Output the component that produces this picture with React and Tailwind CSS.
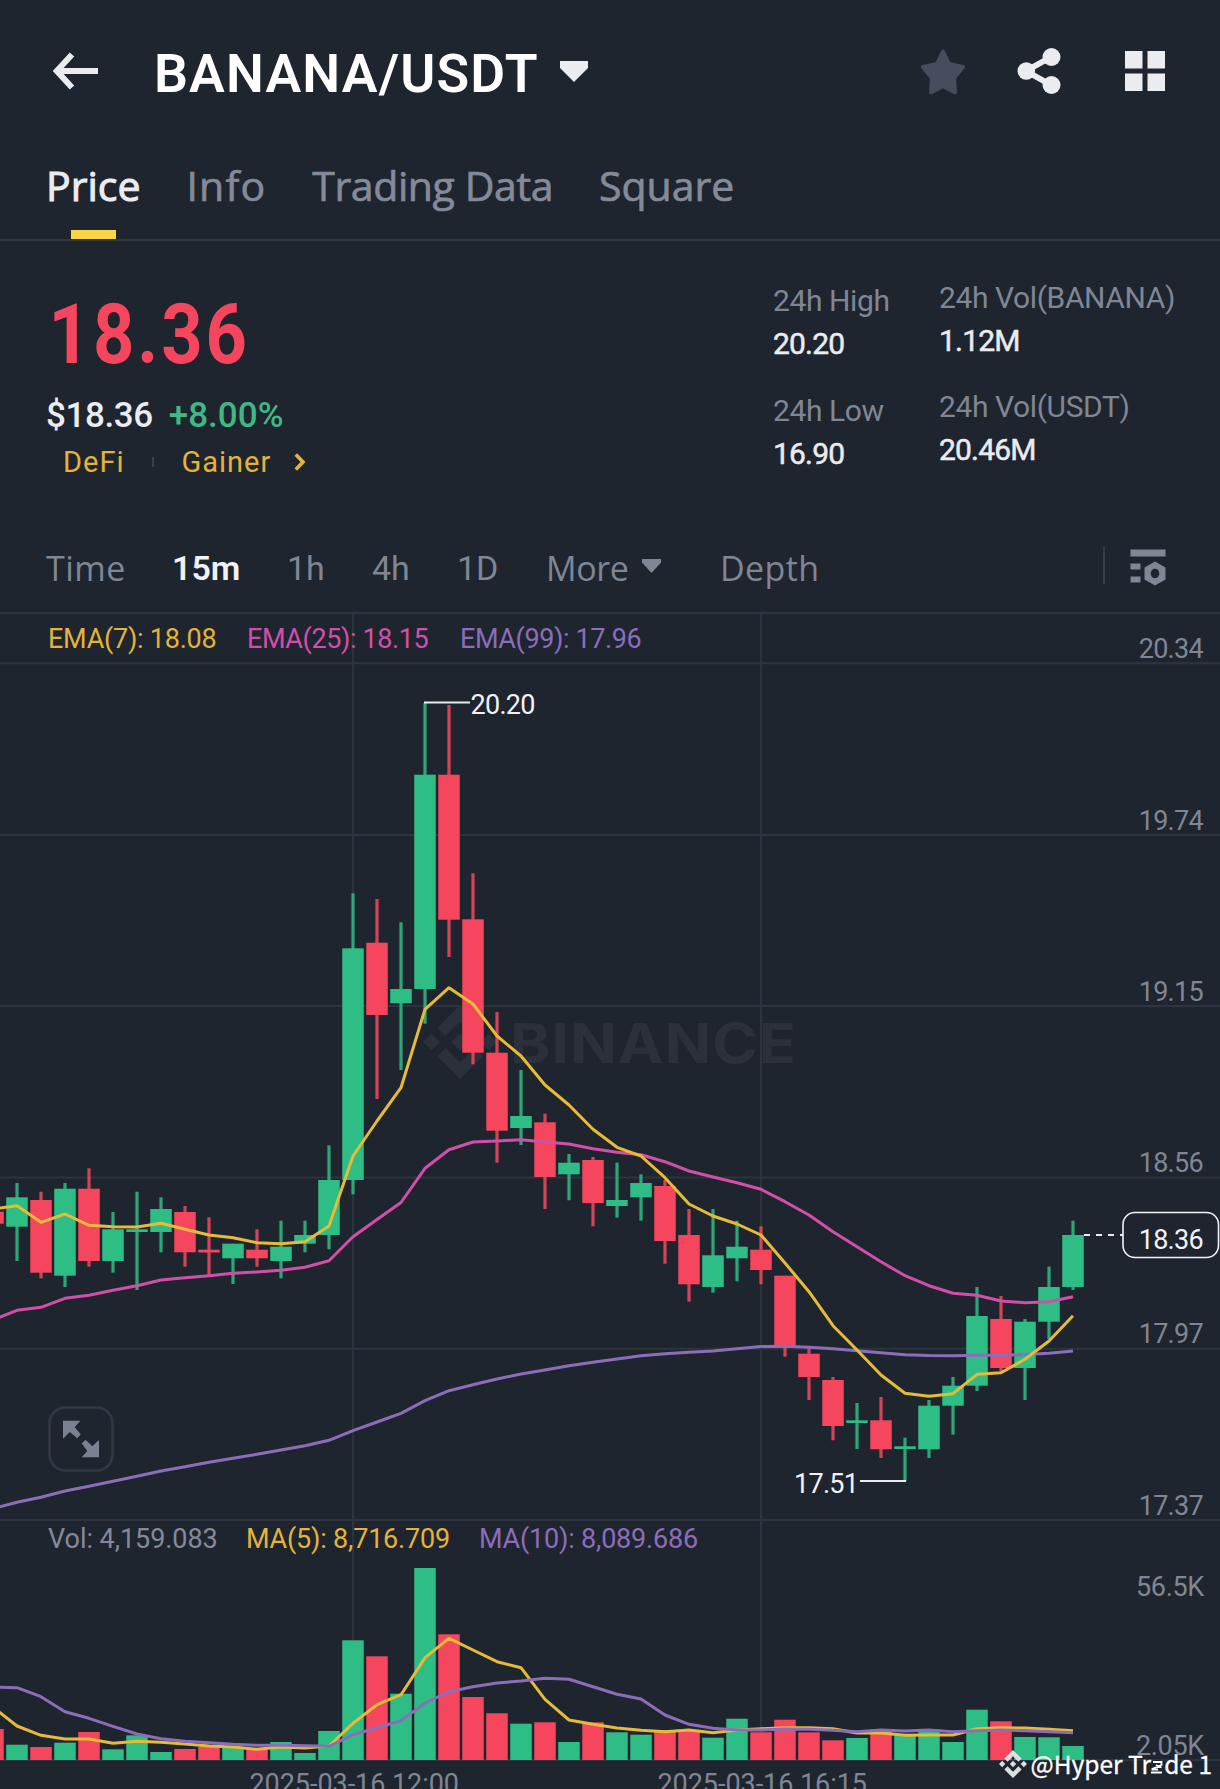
const UP = "#2ebd85";
const DOWN = "#f6465d";
const STEP = 24;
const FIRST_X = -7;
const BODY = 21.5;

// [direction, body top, body bottom, wick top, wick bottom, volume top]
const candles = [
  [DOWN, 1211.7, 1223.7, 1211.7, 1223.7, 1729],
  [UP, 1197.3, 1226.7, 1183, 1261, 1744.7],
  [DOWN, 1200, 1272.7, 1191.7, 1278.3, 1747],
  [UP, 1188.7, 1275.7, 1183, 1287, 1742.7],
  [DOWN, 1188.7, 1261, 1168.3, 1266.7, 1732],
  [UP, 1229.3, 1261, 1212, 1272.7, 1749.3],
  [UP, 1229.3, 1232, 1191.7, 1290, 1735.3],
  [UP, 1209, 1232, 1197.3, 1252.3, 1752],
  [DOWN, 1212, 1252.3, 1206, 1266.7, 1749],
  [DOWN, 1249.7, 1252.5, 1217.3, 1274.7, 1746.7],
  [UP, 1243.7, 1258.3, 1243.7, 1284, 1746.7],
  [DOWN, 1249.7, 1258.3, 1229.3, 1266.7, 1749.7],
  [UP, 1246.7, 1261, 1220.7, 1278.3, 1742],
  [UP, 1235, 1243.7, 1220.7, 1252.3, 1753],
  [UP, 1180, 1235, 1145.3, 1249.3, 1731],
  [UP, 948.3, 1180, 893.3, 1194.3, 1640.3],
  [DOWN, 942.7, 1015, 899, 1099, 1656.3],
  [UP, 989, 1003.3, 922.3, 1070, 1693.7],
  [UP, 774.7, 989, 702.7, 1023.7, 1568],
  [DOWN, 774.7, 919.7, 705, 957, 1634.3],
  [DOWN, 919.3, 1052.7, 873.3, 1064.3, 1697],
  [DOWN, 1052.7, 1130.7, 1012, 1162.7, 1713.3],
  [UP, 1116, 1128, 1070, 1145, 1723.7],
  [DOWN, 1122.3, 1177, 1113.7, 1209, 1722.3],
  [UP, 1162.7, 1174.3, 1154, 1200.3, 1742],
  [DOWN, 1160, 1203, 1157, 1226.3, 1722.3],
  [UP, 1200, 1206, 1162.7, 1217.7, 1732.3],
  [UP, 1183, 1197.3, 1174.3, 1220.7, 1734.7],
  [DOWN, 1186, 1241, 1180, 1263.7, 1730],
  [DOWN, 1235, 1284.3, 1209, 1301.7, 1731],
  [UP, 1255.3, 1287, 1209, 1292.7, 1737.7],
  [UP, 1246.7, 1258.3, 1220.7, 1281.3, 1718.7],
  [DOWN, 1249.7, 1270, 1226.3, 1284.3, 1732.3],
  [DOWN, 1275.7, 1345.7, 1275.7, 1356.7, 1719.7],
  [DOWN, 1353.7, 1377, 1348.3, 1400, 1732.3],
  [DOWN, 1380, 1426, 1377, 1440.3, 1740.3],
  [UP, 1420.3, 1423, 1403, 1449, 1738],
  [DOWN, 1420.3, 1449.3, 1397, 1458, 1729],
  [UP, 1446.3, 1449, 1437.7, 1481.3, 1734.7],
  [UP, 1405.7, 1449.3, 1400, 1458, 1729.3],
  [UP, 1385.7, 1405.7, 1377, 1434.7, 1742],
  [UP, 1316, 1385.7, 1287, 1391, 1709.7],
  [DOWN, 1319, 1368, 1296, 1371.7, 1721.3],
  [UP, 1321.7, 1368, 1319, 1400, 1737],
  [UP, 1287, 1321.7, 1266.7, 1339.3, 1737.3],
  [UP, 1235, 1287, 1220.7, 1290, 1746],
];

const ema7 = [
  1209, 1205.7, 1222.3, 1214, 1225.3, 1226.7, 1227, 1223.3, 1229.3, 1235, 1237.7, 1242.7, 1243.7, 1241.7, 1226,
  1156, 1121, 1087.7, 1009.3, 987.7, 1004, 1036, 1056, 1085, 1105, 1129.3, 1147.3, 1156, 1177.7, 1204, 1216, 1224,
  1235, 1263, 1291.7, 1325.7, 1350, 1375, 1393.3, 1396.3, 1393.7, 1374.3, 1372.7, 1359.3, 1341, 1315.7,
];
const ema25 = [
  1320, 1310.3, 1307.3, 1298.3, 1295.3, 1290.3, 1285.7, 1280, 1277.7, 1275.7, 1273.3, 1272, 1270.3, 1267.3, 1260.7,
  1236.7, 1219.5, 1202.5, 1168.3, 1149.7, 1142, 1141, 1139.7, 1142, 1144, 1148.7, 1152.3, 1154.7, 1161.7, 1171, 1177,
  1182.7, 1189.3, 1201.7, 1215, 1231.7, 1246.7, 1261.7, 1275.7, 1285.7, 1293.3, 1295.3, 1301, 1302.7, 1301.7, 1296.7,
];
const ema99 = [
  1508.5, 1502.3, 1497.3, 1491, 1486.3, 1481.3, 1476.3, 1471, 1466.7, 1462.3, 1458.3, 1454.3, 1450, 1445.7, 1440.3,
  1430.7, 1422, 1413.3, 1400.7, 1390.7, 1384.7, 1379, 1374, 1370, 1365.7, 1362.3, 1359, 1355.7, 1353.7, 1352.3, 1351,
  1348.7, 1346.5, 1346.3, 1347.3, 1348.7, 1350.7, 1352.7, 1354.7, 1355.5, 1355.7, 1355.3, 1355.3, 1354.5, 1353.3, 1351,
];
const volMa5 = [
  1707, 1726, 1735.3, 1739, 1739, 1743.3, 1741.3, 1742.3, 1744, 1746, 1747, 1749.3, 1747, 1748, 1746, 1723.3, 1704.7,
  1694.7, 1657.7, 1638.3, 1650, 1661.7, 1667.7, 1699.3, 1720, 1724.3, 1728, 1730.3, 1731.7, 1730, 1732.7, 1730,
  1728.7, 1727.7, 1727.7, 1728.7, 1733, 1733, 1735.3, 1735, 1735, 1728.7, 1727.7, 1728, 1729.3, 1730.7,
];
const volMa10 = [
  1687, 1687.7, 1696.7, 1711.7, 1718.3, 1726.3, 1734, 1738.7, 1741.3, 1742.7, 1744.3, 1745.3, 1745.3, 1745.7, 1746.3,
  1734.7, 1727.7, 1720.7, 1703, 1691.7, 1686.7, 1683, 1681, 1678.3, 1679.3, 1686.7, 1694.3, 1699, 1715, 1724.3, 1728.3,
  1730, 1730, 1729, 1729.3, 1730.3, 1731.7, 1730, 1731, 1730, 1731.7, 1730.7, 1730, 1730.7, 1731.7, 1732.7,
];

const priceAxis = [
  ["20.34", 663.3],
  ["19.74", 835],
  ["19.15", 1006],
  ["18.56", 1177.5],
  ["17.97", 1348.7],
  ["17.37", 1520],
];

const tabs = [
  { label: "Price", className: "text-[#eaecef] [-webkit-text-stroke:1px_#eaecef]", active: true },
  { label: "Info", className: "text-[#848a98] tracking-[1.2px] [-webkit-text-stroke:0.7px_#848a98]" },
  { label: "Trading Data", className: "text-[#848a98] tracking-[-0.4px] [-webkit-text-stroke:0.7px_#848a98]" },
  { label: "Square", className: "text-[#848a98] [-webkit-text-stroke:0.7px_#848a98]" },
];

const intervals = [
  { label: "Time", className: "w-[126px] font-['Open_Sans',sans-serif] tracking-[0.5px]" },
  { label: "15m", className: "w-[115px] font-semibold text-[#f1f2f5]" },
  { label: "1h", className: "w-[85px]" },
  { label: "4h", className: "w-[85px]" },
  { label: "1D", className: "w-[89px]" },
  { label: "More", className: "w-[96px] font-['Open_Sans',sans-serif] tracking-[-0.4px]" },
];

const centerX = (i) => FIRST_X + i * STEP;
const toPoints = (values) => values.map((y, i) => `${centerX(i)},${y}`).join(" ");

function BinanceMark(props) {
  return (
    <svg viewBox="0 0 126.61 126.61" {...props}>
      <path d="M38.73 53.2l24.59-24.58 24.6 24.6 14.3-14.31L63.32 0 24.42 38.9zM0 63.31l14.3-14.31 14.31 14.31-14.31 14.3zM38.73 73.41l24.59 24.59 24.6-24.6 14.31 14.29-38.9 38.91-38.91-38.88zM98 63.31l14.3-14.31 14.31 14.3-14.31 14.32zM77.83 63.3L63.32 48.78 48.81 63.28l14.51 14.5z" />
    </svg>
  );
}

function Header() {
  return (
    <header className="flex h-[142px] items-center pl-[52px] pr-[55px]">
      <svg className="h-[38px] w-[46px]" viewBox="0 0 46 38" fill="none" stroke="#eaecef" strokeWidth="6">
        <path d="M20 2.5L4.8 19L20 35.5M4 19H46" />
      </svg>
      <h1 className="ml-[56px] w-[406px] pt-[5px] text-[53.5px] leading-none font-semibold tracking-[1.15px] whitespace-nowrap text-white">
        BANANA/USDT
      </h1>
      <svg className="h-[21px] w-[28px]" viewBox="0 0 28 21" fill="#eaecef">
        <path d="M0 0H28V7L14 21L0 7Z" />
      </svg>
      <div className="ml-auto flex items-center">
        <svg className="mt-[2px] mr-[51px] h-[46px] w-[46px]" viewBox="0 0 46 46" fill="#474d5c" stroke="#474d5c" strokeWidth="4" strokeLinejoin="round">
          <path d="M23 2.5L29 15L43 18L34 29L35 43.5L23 37L11 43.5L12 29L3 18L17 15Z" />
        </svg>
        <svg className="mr-[64px] h-[46px] w-[44px]" viewBox="0 0 44 46" fill="#eaecef" stroke="#eaecef">
          <path d="M34 9L9 23L34 37" fill="none" strokeWidth="6" />
          <circle cx="9.3" cy="23" r="8.8" stroke="none" />
          <circle cx="34.5" cy="9" r="9" stroke="none" />
          <circle cx="34.5" cy="37" r="9" stroke="none" />
        </svg>
        <svg className="h-[40px] w-[40px]" viewBox="0 0 40 40" fill="#eaecef">
          <path d="M0 0H17.5V17.5H0ZM22.5 0H40V17.5H22.5ZM0 22.5H17.5V40H0ZM22.5 22.5H40V40H22.5Z" />
        </svg>
      </div>
    </header>
  );
}

function Tabs() {
  return (
    <nav className="flex h-[99px] gap-[46px] border-b-2 border-[#2f3641] pl-[46px] font-['Open_Sans',sans-serif] text-[41px] font-medium">
      {tabs.map((tab) => (
        <div key={tab.label} className="relative h-[97px]">
          <span className={`block leading-[86px] whitespace-nowrap ${tab.className}`}>{tab.label}</span>
          {tab.active && <span className="absolute bottom-0 left-[25px] h-[9px] w-[45px] bg-[#fad541]" />}
        </div>
      ))}
    </nav>
  );
}

function Stat({ label, value }) {
  return (
    <div className="text-[30px] leading-[43px] whitespace-nowrap">
      <div className="tracking-[-0.4px] text-[#7f8694]">{label}</div>
      <div className="tracking-[-0.8px] text-[#eaecef] [-webkit-text-stroke:0.5px_#eaecef]">{value}</div>
    </div>
  );
}

function Summary() {
  return (
    <section className="flex h-[282px]">
      <div className="w-[773px] pt-[54px] pl-[46px]">
        <div className="w-fit origin-left scale-x-[0.86] pl-[3px] text-[84px] leading-[80px] font-bold tracking-[3.4px] text-[#f6465d]">
          18.36
        </div>
        <div className="mt-[21px] flex gap-[16px] text-[35px] leading-[40px] font-medium">
          <span className="tracking-[-0.4px] text-[#eaecef]">$18.36</span>
          <span className="text-[#3fb885]">+8.00%</span>
        </div>
        <div className="mt-[11px] flex items-center pl-[17px] text-[29px] leading-[30px] tracking-[1px] text-[#e3b33a]">
          <span>DeFi</span>
          <span className="ml-[27px] h-[10px] w-[2px] bg-[#3a404b]" />
          <span className="ml-[28px]">Gainer</span>
          <svg className="ml-[23px] h-[18px] w-[12px]" viewBox="0 0 12 18" fill="none" stroke="#e3b33a" strokeWidth="3.6">
            <path d="M1.8 1.5L9 9L1.8 16.5" />
          </svg>
        </div>
      </div>
      <div className="flex w-[166px] flex-col gap-[24px] pt-[38px]">
        <Stat label="24h High" value="20.20" />
        <Stat label="24h Low" value="16.90" />
      </div>
      <div className="flex flex-col gap-[23px] pt-[35px]">
        <Stat label="24h Vol(BANANA)" value="1.12M" />
        <Stat label="24h Vol(USDT)" value="20.46M" />
      </div>
    </section>
  );
}

function IntervalBar() {
  return (
    <div className="flex h-[89px] items-center pl-[46px] text-[34px] whitespace-nowrap text-[#7f8694]">
      {intervals.map((item) => (
        <span key={item.label} className={`pt-[2px] ${item.className}`}>
          {item.label}
        </span>
      ))}
      <svg className="mb-[3px] h-[14px] w-[19px]" viewBox="0 0 19 14" fill="#7f8694">
        <path d="M0 0H19V3.5L9.5 14L0 3.5Z" />
      </svg>
      <span className="ml-[59px] pt-[2px] font-['Open_Sans',sans-serif] tracking-[0.4px]">Depth</span>
      <span className="mr-[25px] mb-[4px] ml-auto h-[37px] w-[2px] bg-[#363c48]" />
      <svg className="mr-[54px] h-[37px] w-[36px]" viewBox="0 0 36 37" fill="#7f8694">
        <path d="M0.5 0.5H35.5V7.5H0.5ZM0.5 14.5H10.5V20.5H0.5ZM0.5 27.5H10.5V33.5H0.5Z" />
        <path
          fillRule="evenodd"
          d="M25 12.5L35.5 18.5V30.5L25 36.5L14.5 30.5V18.5ZM25 19.7A4.3 4.8 0 0 0 25 29.3A4.3 4.8 0 0 0 25 19.7Z"
        />
      </svg>
    </div>
  );
}

function Chart() {
  return (
    <svg
      className="block h-[1177px] w-[1220px]"
      viewBox="0 612 1220 1177"
      fontFamily="Roboto, sans-serif"
      fontSize="27"
      letterSpacing="-0.2"
    >
      <g stroke="#2e343f" strokeWidth="2">
        <path d="M0 613H1220M353 613V1760M761 613V1760M0 1760H1220" />
        {priceAxis.map(([label, y]) => (
          <line key={label} x1="0" x2="1220" y1={y} y2={y} />
        ))}
      </g>

      <BinanceMark x="423" y="1005" width="74" height="74" fill="#2b303b" />
      <text
        x="510"
        y="1063"
        fontFamily="Inter, sans-serif"
        fontSize="55.5"
        fontWeight="700"
        letterSpacing="1"
        textLength="287"
        lengthAdjust="spacingAndGlyphs"
        fill="#2b303b"
      >
        BINANCE
      </text>

      {candles.map(([color, top, bottom, high, low, vol], i) => (
        <g key={i} fill={color}>
          <rect x={centerX(i) - 1.6} y={high} width="3.2" height={low - high} fillOpacity="0.85" />
          <rect x={centerX(i) - BODY / 2} y={top} width={BODY} height={bottom - top} />
          <rect x={centerX(i) - BODY / 2} y={vol} width={BODY} height={1760 - vol} />
        </g>
      ))}

      <g fill="none" strokeWidth="3" strokeLinejoin="round">
        <polyline points={toPoints(ema99)} stroke="#8b6dba" />
        <polyline points={toPoints(ema25)} stroke="#d24fa9" />
        <polyline points={toPoints(ema7)} stroke="#e6bb38" />
        <polyline points={toPoints(volMa5)} stroke="#e6bb38" />
        <polyline points={toPoints(volMa10)} stroke="#8b6dba" />
      </g>

      <text x="48" y="647.5" fill="#e3b33a" letterSpacing="-0.25">EMA(7): 18.08</text>
      <text x="247" y="647.5" fill="#d24fa9" letterSpacing="-0.4">EMA(25): 18.15</text>
      <text x="460" y="647.5" fill="#8b6dba" letterSpacing="-0.4">EMA(99): 17.96</text>
      <text x="48" y="1547.5" fill="#848a98" letterSpacing="-0.05">Vol: 4,159.083</text>
      <text x="246" y="1547.5" fill="#e3b33a">MA(5): 8,716.709</text>
      <text x="479" y="1547.5" fill="#8b6dba">MA(10): 8,089.686</text>

      <g fill="#7f8694" textAnchor="end" letterSpacing="-0.7">
        {priceAxis.map(([label, y]) => (
          <text key={label} x="1203" y={y - 5.5}>
            {label}
          </text>
        ))}
        <text x="1204" y="1595.5" letterSpacing="-0.3">56.5K</text>
        <text x="1204" y="1754.5" letterSpacing="-0.3">2.05K</text>
      </g>
      <g fill="#7f8694" letterSpacing="-0.05">
        <text x="249.5" y="1793">2025-03-16 12:00</text>
        <text x="657.5" y="1793">2025-03-16 16:15</text>
      </g>

      {/* period high and low */}
      <g stroke="#eaecef" strokeWidth="1.8">
        <path d="M424 702.5H470M860 1481H906" />
        <path d="M1084 1235H1123" strokeDasharray="6 6" />
      </g>
      <g fill="#f1f2f5" letterSpacing="-0.7">
        <text x="470.5" y="713.5">20.20</text>
        <text x="794" y="1492.5">17.51</text>
      </g>

      <rect x="1123" y="1212.5" width="95.5" height="45" rx="12" fill="#1f252f" stroke="#f1f2f5" strokeWidth="1.6" />
      <text x="1203" y="1249.3" fill="#f1f2f5" textAnchor="end" letterSpacing="-0.7">
        18.36
      </text>

      <rect x="49.5" y="1407.5" width="63" height="63" rx="16" fill="none" stroke="#323844" strokeWidth="2.6" />
      <path
        d="M63 1420.7H80.3L74.7 1427.3L80.7 1434.3L77.3 1438.3L69.7 1432L63 1438.7ZM99 1457.3H81.7L87.3 1451L81.7 1443.3L85.7 1439.7L92.3 1446.3L99 1440Z"
        fill="#7a8190"
      />
    </svg>
  );
}

function Watermark() {
  return (
    <div className="absolute right-[8px] bottom-[5px] flex h-[40px] items-center gap-[4px] font-['Noto_Sans_CJK_SC',sans-serif] text-[24.5px] leading-[40px] whitespace-nowrap text-white [-webkit-text-stroke:0.3px_#ffffff]">
      <BinanceMark className="h-[28px] w-[28px]" fill="#dcdee2" />
      <span>
        @Hyper Tr
        <span className="relative text-[#1f252f] [-webkit-text-stroke:0]">
          a
          <svg className="absolute bottom-[7px] left-0 h-[14px] w-[13px]" viewBox="0 0 13 14" fill="none" stroke="#ffffff" strokeWidth="1.8">
            <path d="M3 2H11.5V5L2 9M6 5.2L11.5 7.5M1 12.5H12M1.5 9.5H8" />
          </svg>
        </span>
        de 1
      </span>
    </div>
  );
}

export default function App() {
  return (
    <main className="relative h-[1789px] w-[1220px] overflow-hidden bg-[#1f252f] font-[Roboto,sans-serif]">
      <Header />
      <Tabs />
      <Summary />
      <IntervalBar />
      <Chart />
      <Watermark />
    </main>
  );
}
